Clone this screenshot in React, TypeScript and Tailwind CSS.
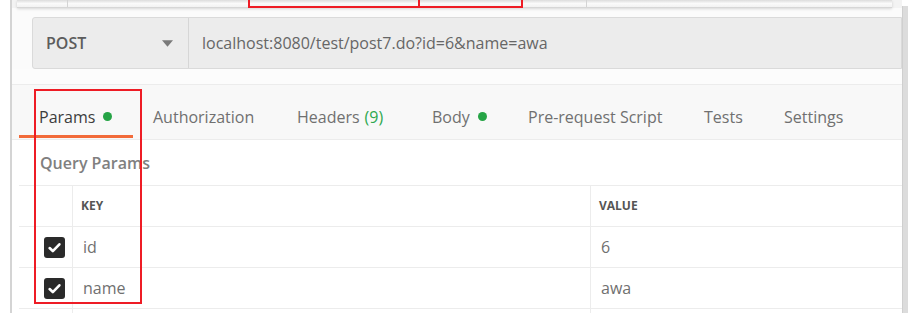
import React from 'react';

const tabs = [
  { label: 'Params', dot: true, active: true, w: 'w-[114px]' },
  { label: 'Authorization', w: 'w-[144px]' },
  { label: 'Headers', count: '(9)', w: 'w-[135px]' },
  { label: 'Body', dot: true, w: 'w-[96px]' },
  { label: 'Pre-request Script', w: 'w-[176px]' },
  { label: 'Tests', w: 'w-[80px]' },
  { label: 'Settings', w: 'w-[110px]' },
];

const params = [
  { key: 'id', value: '6' },
  { key: 'name', value: 'awa' },
];

const CheckBox = () => (
  <div className="w-[21px] h-[21px] rounded-[3px] bg-[#2a2a2a] flex items-center justify-center">
    <svg viewBox="0 0 16 16" className="w-[15px] h-[15px]" fill="none" stroke="white" strokeWidth="2.8" strokeLinecap="round" strokeLinejoin="round">
      <path d="M2.8 8.6l3.4 3.2L13.2 4.6" />
    </svg>
  </div>
);

export default function App() {
  return (
    <div
      className="w-[923px] h-[331px] bg-white relative overflow-hidden text-[#6f6f6f]"
      style={{ fontFamily: '"Open Sans", "Noto Sans", sans-serif' }}
    >
      <div className="flex h-[313px]">
        <div className="w-[10px] bg-white" />
        <div className="w-[2px] bg-[#d4d4d4]" />

        {/* Main panel */}
        <div className="w-[890px] flex flex-col bg-[#fbfbfb]">
          {/* Top strip of the panel above */}
          <div className="h-[8px] shrink-0 flex bg-[#f3f3f3]">
            <div className="w-[5px]" />
            <div className="w-[875px] flex bg-gradient-to-b from-[#dcdcdc] via-[#fafafa] to-[#f2f2f2] border-b border-[#d6d6d6] shadow-[0_1px_3px_rgba(0,0,0,0.15)]">
              <div className="w-[51px] border-r border-[#d4d4d4]" />
              <div className="w-[519px] border-r border-[#d4d4d4]" />
            </div>
          </div>

          {/* URL bar */}
          <div className="shrink-0 pt-[9px] pl-[20px]">
            <div className="h-[52px] flex rounded-l-[3px] border border-[#dadada] bg-[#ececec]">
              <div className="w-[156px] flex items-center justify-between pl-[13px] pr-[15px] border-r border-[#d6d6d6]">
                <span className="text-[16px] font-semibold text-[#5c5c5c]">POST</span>
                <svg viewBox="0 0 10 6" className="w-[11px] h-[7px]" fill="#7a7a7a">
                  <path d="M0 0h10L5 6z" />
                </svg>
              </div>
              <div className="flex items-center pl-[13px] text-[16px] text-[#666]">
                localhost:8080/test/post7.do?id=6&amp;name=awa
              </div>
            </div>
          </div>

          <div className="h-[15px] shrink-0 bg-[#fcfcfc]" />

          {/* Tabs */}
          <div className="h-[56px] shrink-0 flex items-stretch pl-[7px] bg-[#f8f8f8] border-t border-b border-[#ececec]">
            {tabs.map((t) => (
              <div
                key={t.label}
                className={`relative flex items-center shrink-0 pl-[20px] pt-[9px] text-[16px] ${t.w} ${
                  t.active ? 'text-[#3d3d3d]' : 'text-[#707070]'
                }`}
              >
                <span>{t.label}</span>
                {t.count && <span className="ml-[5px] text-[#2fa84f]">{t.count}</span>}
                {t.dot && <span className="ml-[8px] w-[9px] h-[9px] rounded-full bg-[#26a446]" />}
                {t.active && <div className="absolute left-0 right-0 bottom-[1px] h-[3px] bg-[#f26b3a]" />}
              </div>
            ))}
          </div>

          {/* Query params */}
          <div className="flex-1 min-h-0 bg-white pl-[7px] flex flex-col">
            <div className="h-[45px] shrink-0 flex items-center pl-[21px] text-[16px] font-semibold text-[#808080]">
              Query Params
            </div>
            <div className="flex-1 min-h-0 border-t border-[#ececec] overflow-hidden">
              <div className="h-[41px] flex border-b border-[#ececec]">
                <div className="w-[54px] border-r border-[#ececec]" />
                <div className="w-[518px] border-r border-[#ececec] flex items-center pl-[8px] text-[12px] font-bold text-[#555]">
                  KEY
                </div>
                <div className="flex-1 flex items-center pl-[8px] text-[12px] font-bold text-[#555]">VALUE</div>
              </div>
              {params.map((p) => (
                <div key={p.key} className="h-[41px] flex border-b border-[#ececec]">
                  <div className="w-[54px] border-r border-[#ececec] flex items-center pl-[25px]">
                    <CheckBox />
                  </div>
                  <div className="w-[518px] border-r border-[#ececec] flex items-center pl-[10px] text-[16px] text-[#707070]">
                    {p.key}
                  </div>
                  <div className="flex-1 flex items-center pl-[10px] text-[16px] text-[#707070]">{p.value}</div>
                </div>
              ))}
              <div className="h-[42px] flex">
                <div className="w-[54px] border-r border-[#ececec]" />
                <div className="w-[518px] border-r border-[#ececec]" />
              </div>
            </div>
          </div>
        </div>

        <div className="w-[6px] mt-[6px] bg-[#dcdcdc] border-l border-[#cfcfcf]" />
        <div className="flex-1 bg-white" />
      </div>

      {/* Red annotation boxes */}
      <div className="absolute left-[248px] top-[-4px] w-[172px] h-[12px] border-2 border-[#ee1c25]" />
      <div className="absolute left-[418px] top-[-4px] w-[105px] h-[12px] border-2 border-[#ee1c25]" />
      <div className="absolute left-[34px] top-[89px] w-[108px] h-[215px] border-2 border-[#ee1c25]" />
    </div>
  );
}
